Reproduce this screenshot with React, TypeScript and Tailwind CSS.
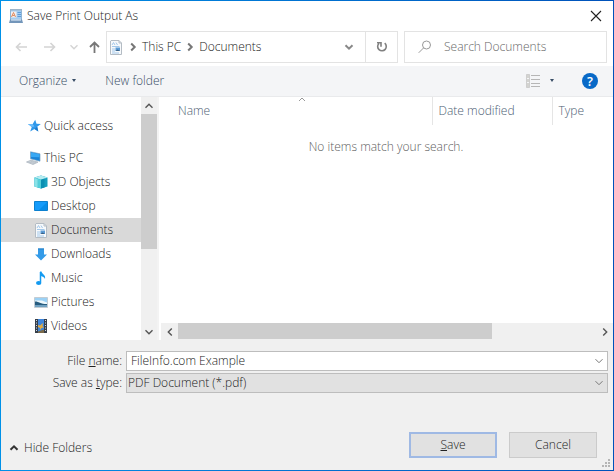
import React from "react";

const Chevron = ({ className = "", width = 1.4 }: { className?: string; width?: number }) => (
  <svg viewBox="0 0 10 10" fill="none" stroke="currentColor" strokeWidth={width} className={`size-[10px] shrink-0 ${className}`}>
    <path d="M1.5 3.2 5 6.7l3.5-3.5" />
  </svg>
);

const NotepadIcon = () => (
  <svg viewBox="0 0 14 16" className="h-4 w-[14px] shrink-0">
    <path d="M1.5 1.5h11v11h-11z" fill="#a5cdf0" stroke="#8fb4d4" />
    <path d="M1 1h12v1.500H1z" fill="#9db5ca" />
    <path d="M2 3.500h5.500v6H2z" fill="#f3efee" />
    <path d="m2.500 9 2-4.500 2 4.500M3.300 7.500h2.400" fill="none" stroke="#e08a5e" />
    <path d="M8.500 4.500H12M8.500 6.500H12M8.500 8.500H12" stroke="#5d9bd8" />
    <path d="M1 11.500h12l1 3.500H0z" fill="#7396ba" />
    <path d="M2 12h10" stroke="#e9f4ff" />
  </svg>
);

const DocumentIcon = () => (
  <svg viewBox="0 0 12 15" className="h-[15px] w-3 shrink-0">
    <path d="M1 .5h8L11.5 3v11.500H.5V1z" fill="#f7f9fb" stroke="#b4bcc4" />
    <path d="M9 .5V3h2.500" fill="none" stroke="#b4bcc4" />
    <path d="m2 5 1.500-2.500L5 5m1-2.500L7.500 5M2 6.500h7.500M2 9h3M2 11h3M2 13h7" fill="none" stroke="#a3c8ea" />
    <path d="M5.500 7.500H10V11H5.500z" fill="#5b9bd5" />
    <path d="m5.500 11 2-1.500L10 11z" fill="#3d5f80" />
  </svg>
);

const StarIcon = () => (
  <svg viewBox="0 0 14 14" className="size-[14px]">
    <path d="m8.200.8 1.300 4L13.800 5l-3.600 2.700 1.100 4.800-3.800-2.600-4.300 2.700 1.600-4.500L1 5l4.700-.1z" fill="#2f98ea" />
    <path d="m1 5 4.700-.1 1.800 2.600-2.700.6z" fill="#69bbfa" />
    <path d="m7.500 9.900 2.700-2.200 1.100 4.800z" fill="#1b79ca" />
  </svg>
);

const ComputerIcon = () => (
  <svg viewBox="0 0 16 14" className="h-[14px] w-4">
    <path d="m4.500.8 9.500 2v7.400l-9.500-2.400z" fill="#1a84d8" stroke="#7ca4c2" strokeWidth=".7" />
    <path d="m5 1.400 8.500 1.900v3L5 6z" fill="#38a8f4" />
    <path d="m.5 11 4.500-1.800 7 1.900-5 2.400z" fill="#d3d9df" stroke="#a4aeb8" strokeWidth=".7" />
    <path d="m2.500 11 6 1.500M4.300 10.200l6 1.500" stroke="#a8b3bd" strokeWidth=".6" />
  </svg>
);

const CubeIcon = () => (
  <svg viewBox="0 0 14 14" className="size-[14px]">
    <path d="m7 .5 6.500 2v9L7 13.500.5 11.500v-9z" fill="#159fbe" />
    <path d="m7 .5 6.500 2L7 4.700.5 2.500z" fill="#b5ecf0" />
    <path d="M.5 2.500 7 4.700v8.800L.5 11.500z" fill="#55cfda" />
    <path d="m.5 3 3 1v8.300l-3-.9z" fill="#8be2e7" />
    <path d="M7 4.700 10.500 3.500v8.900L7 13.500z" fill="#0b8fb2" />
  </svg>
);

const DesktopIcon = () => (
  <svg viewBox="0 0 14 10" className="h-[10px] w-[14px]">
    <path d="M.5.5h13v9H.5z" fill="#159bfa" stroke="#0c80cf" />
    <path d="M13 1v8H5z" fill="#078de9" />
  </svg>
);

const DownloadIcon = () => (
  <svg viewBox="0 0 12 13" className="h-[13px] w-3">
    <path d="M3 .5h6v6h3l-6 6-6-6h3z" fill="#349be8" />
    <path d="M3 .5h6v1H3z" fill="#267fc5" />
  </svg>
);

const MusicIcon = () => (
  <svg viewBox="0 0 12 15" className="h-[15px] w-3">
    <path d="M5.500 1v10.500" stroke="#139af0" strokeWidth="1.500" />
    <path d="M5 .5h1.500c.5 3 4.500 3 3.500 7.500-.7-2-2.500-2.500-4-3z" fill="#149bf1" />
    <ellipse cx="3.700" cy="12" rx="2.700" ry="2" fill="#139af0" />
  </svg>
);

const PictureIcon = () => (
  <svg viewBox="0 0 14 11" className="h-[11px] w-[14px]">
    <path d="M.5.5h13v10H.5z" fill="#9bd1f5" stroke="#c3ccd3" />
    <path d="M1 3.500h7l5 2V8H1z" fill="#edf8fc" />
    <path d="M1 4.500c3-.5 5 2.500 12 2.500v1.500H1z" fill="#275c7f" />
    <path d="M1 8h12v2H1z" fill="#6fa0c0" />
  </svg>
);

const VideoIcon = () => (
  <svg viewBox="0 0 12 14" className="h-[14px] w-3">
    <path d="M0 0h12v14H0z" fill="#373f4a" />
    <path d="M3 0h6v14H3z" fill="#3f86dc" />
    <path d="m3 6 2 .5L8 4l-.5 3L9 8.500 6.500 9 5 11V9L3 8z" fill="#e4ac41" />
    <path d="M3 12.500 9 10.500v3.500H3z" fill="#7a6a4a" />
    <path d="M1.500 1v12M10.500 1v12" stroke="#d3dce4" strokeDasharray="1 1.500" />
  </svg>
);

const folders = [
  { name: "3D Objects", icon: CubeIcon },
  { name: "Desktop", icon: DesktopIcon },
  { name: "Documents", icon: DocumentIcon },
  { name: "Downloads", icon: DownloadIcon },
  { name: "Music", icon: MusicIcon },
  { name: "Pictures", icon: PictureIcon },
  { name: "Videos", icon: VideoIcon },
];

const Titlebar = () => (
  <header className="flex h-[30px] items-center bg-white pr-[11px] pl-2">
    <NotepadIcon />
    <h1 className="ml-1 flex-1">Save Print Output As</h1>
    <button aria-label="Close">
      <svg viewBox="0 0 12 12" className="size-3" fill="none" stroke="#222" strokeWidth="1.100">
        <path d="m1 1 10 10M11 1 1 11" />
      </svg>
    </button>
  </header>
);

const Navigation = () => (
  <nav className="flex h-8 items-stretch gap-[6px] bg-white pr-[6px]">
    <div className="flex w-[99px] shrink-0 items-center pl-[14px] text-[#d4d4d4]">
      <button aria-label="Back">
        <svg viewBox="0 0 12 10" className="h-[10px] w-3" fill="none" stroke="currentColor" strokeWidth="1.600"><path d="M12 5H1.500M5.500 1l-4 4 4 4" /></svg>
      </button>
      <button aria-label="Forward" className="ml-[17px]">
        <svg viewBox="0 0 12 10" className="h-[10px] w-3" fill="none" stroke="currentColor" strokeWidth="1.600"><path d="M0 5h10.500m-4-4 4 4-4 4" /></svg>
      </button>
      <button aria-label="Recent locations" className="ml-[13px]"><Chevron /></button>
      <button aria-label="Up" className="ml-[10px] text-[#777]">
        <svg viewBox="0 0 11 12" className="h-3 w-[11px]" fill="none" stroke="currentColor" strokeWidth="1.800"><path d="M5.500 12V2M1 6l4.500-4.500L10 6" /></svg>
      </button>
    </div>
    <div className="flex min-w-0 flex-1 border border-[#e3e3e3]">
      <div className="flex flex-1 items-center pl-[3px]">
        <DocumentIcon />
        <Chevron className="mr-1 ml-[6px] -rotate-90 text-[#777]" width={2} />
        <button>This PC</button>
        <Chevron className="mx-1 -rotate-90 text-[#777]" width={2} />
        <button>Documents</button>
        <button aria-label="Previous locations" className="mr-[11px] ml-auto text-[#888]"><Chevron width={2} /></button>
      </div>
      <button aria-label="Refresh" className="flex w-8 items-center justify-center border-l border-[#e3e3e3]">
        <svg viewBox="0 0 12 12" className="size-3" fill="none" stroke="#808080" strokeWidth="1.600">
          <path d="M8.700 2.200a4.300 4.300 0 1 1-5.800.3M1 1.800h4v4" />
        </svg>
      </button>
    </div>
    <label className="flex w-[203px] shrink-0 items-center border border-[#e3e3e3] pl-[13px]">
      <svg viewBox="0 0 14 14" className="size-[14px] shrink-0" fill="none" stroke="#999" strokeWidth="1"><circle cx="8.500" cy="5" r="4" /><path d="m5.700 7.800-5 5" /></svg>
      <input aria-label="Search Documents" placeholder="Search Documents" className="ml-3 min-w-0 flex-1 outline-none placeholder:text-[#686868]" />
    </label>
  </nav>
);

const Toolbar = () => (
  <div className="mt-[3px] flex h-[31px] items-center border-b border-[#e9eaec] bg-[#f4f5f7] pl-[18px] text-[#384d66]">
    <button className="flex items-center gap-1">
      Organize
      <svg viewBox="0 0 6 4" className="h-1 w-[6px]" fill="currentColor"><path d="M1 0h4L3 3z" /></svg>
    </button>
    <button className="ml-7 flex-1 text-left">New folder</button>
    <button aria-label="Change view" className="flex items-center gap-[9px]">
      <svg viewBox="0 0 14 14" className="size-[14px]">
        <path d="M.5.500h3v13h-3z" fill="#d3d3d0" stroke="#c4c4c4" strokeWidth=".7" />
        <path d="M5 1.500h9M5 5.500h9M5 9.500h9M5 12.500h9" stroke="#b6b6b6" />
        <path d="M1 4.500h2M1 8.500h2" stroke="#f4f5f7" />
      </svg>
      <svg viewBox="0 0 6 4" className="h-1 w-[6px]" fill="currentColor"><path d="M1 0h4L3 3z" /></svg>
    </button>
    <button aria-label="Help" className="mr-[15px] ml-[27px] flex size-4 items-center justify-center rounded-full bg-[#0869c7] text-[13px] leading-4 font-semibold text-white">?</button>
  </div>
);

const Sidebar = () => (
  <aside className="flex w-[158px] shrink-0 border-r-2 border-[#f3f3f3] bg-white">
    <div className="min-w-0 flex-1 pt-[17px]">
      <button className="flex h-6 w-full items-center pl-[26px]">
        <span className="flex w-[17px] justify-start"><StarIcon /></span>Quick access
      </button>
      <button className="mt-2 flex h-6 w-full items-center pl-[25px]">
        <span className="flex w-[18px] justify-start"><ComputerIcon /></span>This PC
      </button>
      {folders.map(({ name, icon: Icon }) => (
        <button key={name} className={`flex h-6 w-full items-center pl-[33px] ${name === "Documents" ? "bg-[#d9d9d9]" : ""}`}>
          <span className="mr-[3px] flex w-[14px] justify-center"><Icon /></span>{name}
        </button>
      ))}
    </div>
    <div className="flex w-4 flex-col items-center bg-[#f0f0f0] text-[#555]">
      <div className="flex h-[17px] items-center"><Chevron className="rotate-180" /></div>
      <div className="h-[135px] w-full bg-[#cdcdcd]" />
      <div className="mt-auto flex h-[17px] items-center"><Chevron /></div>
    </div>
  </aside>
);

const FileList = () => (
  <section className="flex min-w-0 flex-1 flex-col bg-white">
    <table className="w-full table-fixed text-[#4d5e74]">
      <thead>
        <tr className="h-7 text-left">
          <th className="relative border-r border-[#e5e5e5] pl-[19px] font-[350]">
            Name
            <svg viewBox="0 0 8 5" className="absolute top-0 right-[126px] h-[5px] w-2" fill="none" stroke="#999"><path d="m1 4 3-3 3 3" /></svg>
          </th>
          <th className="w-[120px] border-r border-[#e5e5e5] pl-[6px] font-[350]">Date modified</th>
          <th className="w-[61px] pl-[6px] font-[350]">Type</th>
        </tr>
      </thead>
    </table>
    <p className="mt-[14px] text-center text-[#606060]">No items match your search.</p>
    <div className="mt-auto ml-[2px] flex h-[17px] items-center bg-[#f0f0f0] text-[#555]">
      <div className="flex w-[17px] justify-center"><Chevron className="rotate-90" /></div>
      <div className="flex h-full flex-1"><div className="h-4 w-3/4 bg-[#cdcdcd]" /></div>
      <div className="flex w-[17px] justify-center"><Chevron className="-rotate-90" /></div>
    </div>
  </section>
);

const Footer = () => (
  <footer className="flex h-[130px] shrink-0 flex-col bg-[#f0f0f0] pt-[11px]">
    <div className="grid grid-cols-[121px_1fr] gap-x-1 gap-y-[2px] pr-[5px]">
      <label htmlFor="file-name" className="self-center text-right">File <u>n</u>ame:</label>
      <div className="flex h-5 items-center border border-[#bdbdbd] bg-white pr-[3px]">
        <input id="file-name" defaultValue="FileInfo.com Example" className="min-w-0 flex-1 pl-1 outline-none" />
        <Chevron className="text-[#777]" width={1} />
      </div>
      <label htmlFor="file-type" className="self-center text-right">Save as <u>t</u>ype:</label>
      <div className="relative">
        <select id="file-type" className="block h-5 w-full appearance-none border border-[#bdbdbd] bg-[#e1e1e1] pl-px">
          <option>PDF Document (*.pdf)</option>
        </select>
        <Chevron className="pointer-events-none absolute top-[5px] right-1 text-[#777]" width={1} />
      </div>
    </div>
    <div className="mt-[39px] flex items-start pr-4 pl-2">
      <button className="mt-2 flex items-center gap-[5px]">
        <Chevron className="rotate-180 text-[#333]" width={2} />
        Hide Folders
      </button>
      <button className="ml-auto h-[26px] w-[88px] border-2 border-[#9fb9e4] bg-[#e1e1e1]"><u>S</u>ave</button>
      <button className="ml-3 h-[26px] w-[88px] border border-[#cbcbcb] bg-[#e1e1e1]">Cancel</button>
    </div>
    <svg viewBox="0 0 9 9" className="mt-auto mr-[2px] mb-[2px] ml-auto size-[9px]" fill="#b5b5b5">
      <path d="M6 0h2v2H6zM3 3h2v2H3zM6 3h2v2H6zM0 6h2v2H0zM3 6h2v2H3zM6 6h2v2H6z" />
    </svg>
  </footer>
);

const App = () => {
  return (
    <div className="flex min-h-screen bg-linear-to-r from-[#0091e8] to-[#0052ba] p-px font-['Open_Sans',sans-serif] text-[12px] leading-4 font-[350] text-[#222]">
      <main className="flex min-w-0 flex-1 flex-col bg-white">
        <Titlebar />
        <Navigation />
        <Toolbar />
        <div className="flex min-h-[243px] flex-1">
          <Sidebar />
          <FileList />
        </div>
        <Footer />
      </main>
    </div>
  );
};

export default App;
